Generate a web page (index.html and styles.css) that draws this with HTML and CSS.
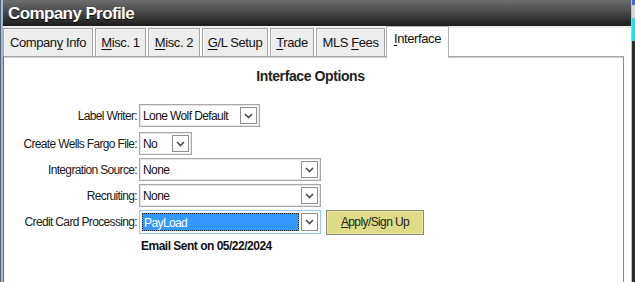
FILE: index.html
```html
<!DOCTYPE html>
<html>
<head>
<meta charset="utf-8">
<link rel="stylesheet" href="styles.css">
</head>
<body>
<div class="screen">
  <div class="edge-left"></div>
  <div class="window">
    <div class="titlebar">Company Profile</div>
    <div class="tabs">
      <div class="tab w-info">Compan<u>y</u> Info</div>
      <div class="tab w-misc1"><u>M</u>isc. 1</div>
      <div class="tab w-misc2"><u>M</u>isc. 2</div>
      <div class="tab w-gl"><u>G</u>/L Setup</div>
      <div class="tab w-trade"><u>T</u>rade</div>
      <div class="tab w-mls">MLS <u>F</u>ees</div>
      <div class="tab active w-iface"><u>I</u>nterface</div>
    </div>
    <div class="panel">
      <div class="heading">Interface Options</div>
      <div class="form">
        <div class="row first">
          <div class="label">Label Writer:</div>
          <div class="select w-label"><span class="value">Lone Wolf Default</span><span class="drop"><svg width="9" height="6" viewBox="0 0 9 6"><path d="M1 1 L4.5 4.5 L8 1" fill="none" stroke="#4a4a4a" stroke-width="1.6"/></svg></span></div>
        </div>
        <div class="row">
          <div class="label">Create Wells Fargo File:</div>
          <div class="select w-wells"><span class="value">No</span><span class="drop"><svg width="9" height="6" viewBox="0 0 9 6"><path d="M1 1 L4.5 4.5 L8 1" fill="none" stroke="#4a4a4a" stroke-width="1.6"/></svg></span></div>
        </div>
        <div class="row">
          <div class="label">Integration Source:</div>
          <div class="select w-wide"><span class="value">None</span><span class="drop"><svg width="9" height="6" viewBox="0 0 9 6"><path d="M1 1 L4.5 4.5 L8 1" fill="none" stroke="#4a4a4a" stroke-width="1.6"/></svg></span></div>
        </div>
        <div class="row">
          <div class="label">Recruiting:</div>
          <div class="select w-wide"><span class="value">None</span><span class="drop"><svg width="9" height="6" viewBox="0 0 9 6"><path d="M1 1 L4.5 4.5 L8 1" fill="none" stroke="#4a4a4a" stroke-width="1.6"/></svg></span></div>
        </div>
        <div class="row last">
          <div class="label">Credit Card Processing:</div>
          <div class="select w-wide focused"><span class="value selected">PayLoad</span><span class="drop"><svg width="9" height="6" viewBox="0 0 9 6"><path d="M1 1 L4.5 4.5 L8 1" fill="none" stroke="#4a4a4a" stroke-width="1.6"/></svg></span></div>
          <div class="btn"><u>A</u>pply/Sign Up</div>
        </div>
        <div class="row note">
          <div class="label"></div>
          <div class="email">Email Sent on 05/22/2024</div>
        </div>
      </div>
    </div>
  </div>
  <div class="edge-right">
    <div class="edge-line"></div>
    <div class="edge-strip">
      <div class="seg seg-blue"></div>
      <div class="seg seg-gray"></div>
      <div class="seg seg-cyan"></div>
      <div class="seg seg-dark"></div>
    </div>
  </div>
</div>
</body>
</html>
```

FILE: styles.css
```css
html, body {
  margin: 0;
  padding: 0;
  background: #ffffff;
}
body {
  font-family: "Liberation Sans", Arial, sans-serif;
  color: #1a1a1a;
}
.screen {
  display: flex;
  width: 635px;
  height: 282px;
  overflow: hidden;
}
.edge-left {
  width: 1px;
  border-right: 2px solid #a3bbd8;
  background: #566170;
  flex: none;
}
.window {
  width: 628px;
  flex: none;
  display: flex;
  flex-direction: column;
  background: #ffffff;
}
.titlebar {
  height: 26px;
  line-height: 27px;
  background: linear-gradient(#6e6e6e, #4a4a4a 45%, #1c1c1c);
  color: #ffffff;
  font-weight: bold;
  font-size: 17px;
  letter-spacing: -0.6px;
  padding-left: 5px;
  text-shadow: 0 1px 0 #000;
}
.tabs {
  height: 30px;
  display: flex;
  align-items: flex-end;
  background: #ffffff;
  box-shadow: inset 0 2px 0 #eeeeee;
  position: relative;
  z-index: 2;
}
.tab {
  box-sizing: border-box;
  height: 28px;
  margin-right: 2px;
  background: #ededed;
  border: 1px solid #a2a2a2;
  border-bottom: none;
  box-shadow: inset 1px 1px 0 #f8f8f8;
  font-size: 13px;
  letter-spacing: -0.4px;
  text-align: center;
  line-height: 28px;
  color: #111;
  flex: none;
}
.tab u { text-decoration-thickness: 1px; text-underline-offset: 2px; }
.w-info { width: 90px; }
.w-misc1 { width: 51px; }
.w-misc2 { width: 52px; }
.w-gl { width: 66px; }
.w-trade { width: 44px; }
.w-mls { width: 69px; margin-right: 1px; }
.w-iface { width: 63px; }
.tab.active {
  height: 32px;
  margin-bottom: -2px;
  background: #ffffff;
  box-shadow: none;
  border-color: #b4b4b4;
  line-height: 24px;
}
.panel {
  flex: 1;
  margin-right: 7px;
  border-top: 1px solid #a4a4ab;
  box-shadow: inset 0 1px 0 #cfcfd4;
  border-right: 1px solid #8b8b92;
  border-left: 1px solid #6a6a6a;
  padding-top: 11px;
}
.heading {
  text-align: center;
  font-weight: bold;
  font-size: 14px;
  letter-spacing: -0.4px;
  line-height: 16px;
  color: #222;
  padding-right: 6px;
}
.form {
  margin-top: 20px;
  display: flex;
  flex-direction: column;
  gap: 3px;
}
.row {
  display: flex;
  align-items: center;
  height: 23px;
}
.row.first { margin-bottom: 2px; }
.row.last { height: 24px; }
.label {
  width: 133px;
  flex: none;
  text-align: right;
  font-size: 12px;
  letter-spacing: -0.65px;
  margin-right: 2px;
  color: #1a1a1a;
}
.select {
  box-sizing: border-box;
  height: 23px;
  display: flex;
  align-items: stretch;
  border: 1px solid #a8a8a8;
  box-shadow: inset 0 0 0 1px #e6e6e6;
  padding: 2px;
  background: #fff;
  flex: none;
}
.w-label { width: 121px; }
.w-wells { width: 53px; }
.w-wide { width: 182px; }
.value {
  flex: 1;
  font-size: 12px;
  letter-spacing: -0.6px;
  line-height: 19px;
  padding-left: 1px;
  color: #111;
  box-sizing: border-box;
}
.drop {
  width: 17px;
  box-sizing: border-box;
  border: 1px solid #8e8e8e;
  background: #ffffff;
  display: flex;
  align-items: center;
  justify-content: center;
  margin-left: 2px;
  flex: none;
}
.select.focused {
  height: 24px;
  border-color: #94c5f6;
  box-shadow: none;
}
.value.selected {
  background: #3399ff;
  color: #ffffff;
  border: 1px dotted #222;
  line-height: 18px;
  padding-left: 1px;
}
.btn {
  box-sizing: border-box;
  margin-left: 5px;
  width: 98px;
  height: 25px;
  background: #dedc86;
  border: 1px solid #8a8a7a;
  box-shadow: inset 0 0 0 1px #e9e79c;
  font-size: 12px;
  letter-spacing: -0.6px;
  line-height: 23px;
  text-align: center;
  color: #222;
}
.row.note { height: 14px; margin-top: 2px; }
.email {
  font-size: 12px;
  font-weight: bold;
  letter-spacing: -0.5px;
  padding-left: 2px;
  color: #111;
}
.edge-right {
  display: flex;
  flex: none;
  width: 4px;
}
.edge-line {
  width: 1px;
  background: #a9c4e2;
}
.edge-strip {
  width: 3px;
  display: flex;
  flex-direction: column;
}
.seg-blue { height: 5px; background: #2f6fe0; }
.seg-gray { height: 13px; background: #d6d6d6; }
.seg-cyan { height: 23px; background: #14e4f4; }
.seg-dark { flex: 1; background: #2c2c2c; }
```
